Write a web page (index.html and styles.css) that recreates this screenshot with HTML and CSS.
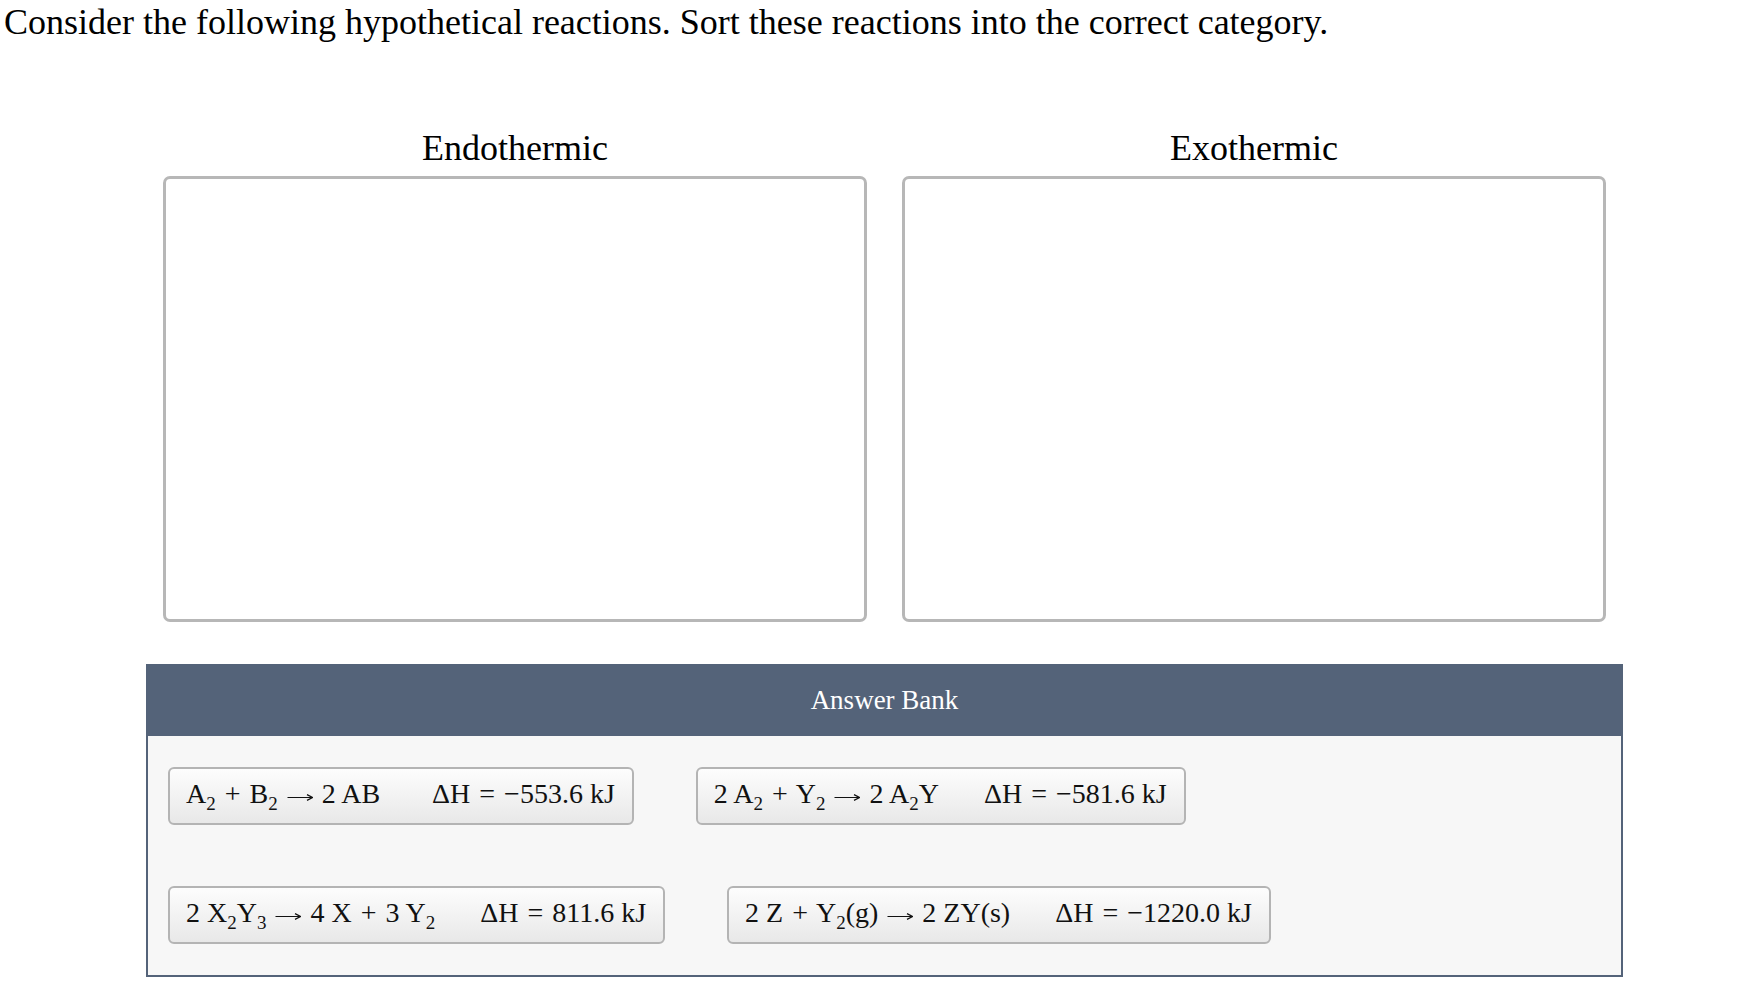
FILE: index.html
```html
<!DOCTYPE html>
<html lang="en">
<head>
<meta charset="utf-8">
<title>Sort reactions</title>
<link rel="stylesheet" href="styles.css">
</head>
<body>
<p class="title">Consider the following hypothetical reactions. Sort these reactions into the correct category.</p>
<div class="sorter">
  <div class="columns">
    <div class="column">
      <div class="column-label">Endothermic</div>
      <div class="dropzone"></div>
    </div>
    <div class="column">
      <div class="column-label">Exothermic</div>
      <div class="dropzone"></div>
    </div>
  </div>
  <div class="bank">
    <div class="bank-header">Answer Bank</div>
    <div class="bank-body">
      <div class="card"><span class="eq">A<sub>2</sub> <span class="op">+</span> B<sub>2</sub> <span class="arrow"><svg viewBox="0 0 26 10" width="26" height="10"><path d="M0.5 5.5H25M20 2.6L25.5 5.5L20 8.4" fill="none" stroke="#111" stroke-width="1.2"/></svg></span> 2 AB</span><span class="dh dh-wide">ΔH <span class="op">=</span> −553.6 kJ</span></div>
      <div class="card"><span class="eq">2 A<sub>2</sub> <span class="op">+</span> Y<sub>2</sub> <span class="arrow"><svg viewBox="0 0 26 10" width="26" height="10"><path d="M0.5 5.5H25M20 2.6L25.5 5.5L20 8.4" fill="none" stroke="#111" stroke-width="1.2"/></svg></span> 2 A<sub>2</sub>Y</span><span class="dh">ΔH <span class="op">=</span> −581.6 kJ</span></div>
      <div class="card"><span class="eq">2 X<sub>2</sub>Y<sub>3</sub> <span class="arrow"><svg viewBox="0 0 26 10" width="26" height="10"><path d="M0.5 5.5H25M20 2.6L25.5 5.5L20 8.4" fill="none" stroke="#111" stroke-width="1.2"/></svg></span> 4 X <span class="op">+</span> 3 Y<sub>2</sub></span><span class="dh">ΔH <span class="op">=</span> 811.6 kJ</span></div>
      <div class="card"><span class="eq">2 Z <span class="op">+</span> Y<sub>2</sub>(g) <span class="arrow"><svg viewBox="0 0 26 10" width="26" height="10"><path d="M0.5 5.5H25M20 2.6L25.5 5.5L20 8.4" fill="none" stroke="#111" stroke-width="1.2"/></svg></span> 2 ZY(s)</span><span class="dh">ΔH <span class="op">=</span> −1220.0 kJ</span></div>
    </div>
  </div>
</div>
</body>
</html>
```

FILE: styles.css
```css
html, body {
  margin: 0;
  padding: 0;
  background: #ffffff;
}

body {
  font-family: "Liberation Serif", "Times New Roman", serif;
  color: #000;
}

.title {
  margin: 2px 0 0 4px;
  font-size: 36px;
  line-height: 41px;
}

.sorter {
  margin-left: 146px;
  width: 1477px;
}

.columns {
  display: flex;
  gap: 35px;
  padding: 0 17px;
  margin-top: 85px;
}

.column {
  flex: 1;
  display: flex;
  flex-direction: column;
}

.column-label {
  text-align: center;
  font-size: 36px;
  line-height: 41px;
  margin-bottom: 7px;
}

.dropzone {
  height: 446px;
  box-sizing: border-box;
  border: 3px solid #b7b7b7;
  border-radius: 7px;
  background: #fff;
}

.bank {
  margin-top: 42px;
  border: 2px solid #546379;
  border-top: none;
}

.bank-header {
  background: #546379;
  color: #fff;
  text-align: center;
  font-size: 27px;
  height: 72px;
  line-height: 72px;
}

.bank-body {
  background: #f7f7f7;
  display: flex;
  flex-wrap: wrap;
  align-items: flex-start;
  gap: 61px 62px;
  padding: 31px 20px 31px 20px;
}

.card {
  display: flex;
  align-items: center;
  height: 58px;
  box-sizing: border-box;
  padding: 0 17px 4px 16px;
  border: 2px solid #b4b4b4;
  border-radius: 6px;
  background: linear-gradient(#fdfdfd, #e8e8e8);
  font-size: 28px;
  line-height: 30px;
  color: #111;
  white-space: nowrap;
}

.card sub {
  font-size: 19px;
  line-height: 0;
  vertical-align: -7px;
}

.op {
  margin: 0 2px;
}

.arrow {
  display: inline-block;
  vertical-align: middle;
  margin: 0 2px;
}

.arrow svg {
  display: block;
}

.dh {
  margin-left: 45px;
}

.dh-wide {
  margin-left: 52px;
}
```
